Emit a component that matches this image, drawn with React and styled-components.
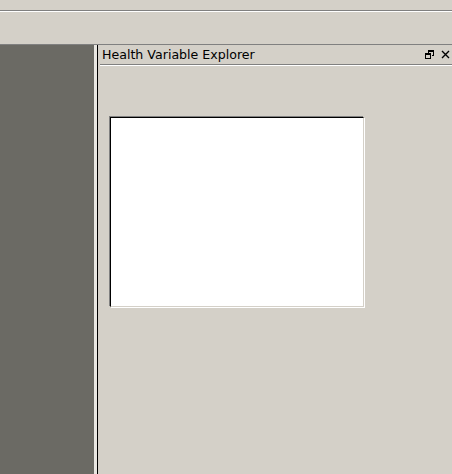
import styled, { createGlobalStyle } from 'styled-components';

const GlobalStyle = createGlobalStyle`
  html, body {
    margin: 0;
    padding: 0;
    background: #d4d0c8;
    font-family: 'DejaVu Sans', sans-serif;
  }
`;

const Window = styled.div`
  width: 452px;
  height: 474px;
  display: flex;
  flex-direction: column;
  background: #d4d0c8;
  overflow: hidden;
`;

const MenuBar = styled.div`
  height: 10px;
  border-bottom: 1px solid #808080;
  box-shadow: 0 1px 0 #ffffff;
`;

const ToolBar = styled.div`
  height: 33px;
  border-bottom: 1px solid #808080;
`;

const Body = styled.div`
  flex: 1;
  display: flex;
  min-height: 0;
`;

const SidePane = styled.div`
  width: 94px;
  background: #6b6a64;
`;

const Splitter = styled.div`
  width: 3px;
  background: #e8e6e1;
  border-right: 1px solid #000;
`;

const Dock = styled.div`
  flex: 1;
  display: flex;
  flex-direction: column;
  border-left: 2px solid #d4d0c8;
`;

const TitleBar = styled.div`
  height: 19px;
  display: flex;
  align-items: center;
  padding: 0 0 0 2px;
  border-bottom: 1px solid #808080;
  box-shadow: 0 1px 0 #ffffff;
`;

const Title = styled.span`
  flex: 1;
  font-size: 12.6px;
  color: #000;
  white-space: nowrap;
`;

const TitleButton = styled.button`
  width: 14px;
  height: 14px;
  margin-left: 2px;
  padding: 0;
  border: none;
  background: transparent;
  display: flex;
  align-items: center;
  justify-content: center;
`;

const Content = styled.div`
  flex: 1;
  padding: 52px 0 0 10px;
`;

const Canvas = styled.div`
  width: 252px;
  height: 188px;
  background: #ffffff;
  border-style: solid;
  border-width: 1px;
  border-color: #000 #d4d0c8 #d4d0c8 #000;
  box-shadow: -1px -1px 0 #808080, 1px 1px 0 #ffffff;
`;

const RestoreIcon = () => (
  <svg width="9" height="9" viewBox="0 0 9 9" shapeRendering="crispEdges">
    <path d="M3 0h6v6h-2v-1h1v-3h-4v1h-1z" fill="#000" />
    <path d="M0 3h6v6h-6z M1 5v3h4v-3z" fill="#000" fillRule="evenodd" />
  </svg>
);

const CloseIcon = () => (
  <svg width="9" height="9" viewBox="0 0 9 9">
    <path d="M1 1L8 8M8 1L1 8" stroke="#000" strokeWidth="1.4" />
  </svg>
);

export default function App() {
  return (
    <>
      <GlobalStyle />
      <Window>
        <MenuBar />
        <ToolBar />
        <Body>
          <SidePane />
          <Splitter />
          <Dock>
            <TitleBar>
              <Title>Health Variable Explorer</Title>
              <TitleButton aria-label="Float">
                <RestoreIcon />
              </TitleButton>
              <TitleButton aria-label="Close">
                <CloseIcon />
              </TitleButton>
            </TitleBar>
            <Content>
              <Canvas />
            </Content>
          </Dock>
        </Body>
      </Window>
    </>
  );
}
